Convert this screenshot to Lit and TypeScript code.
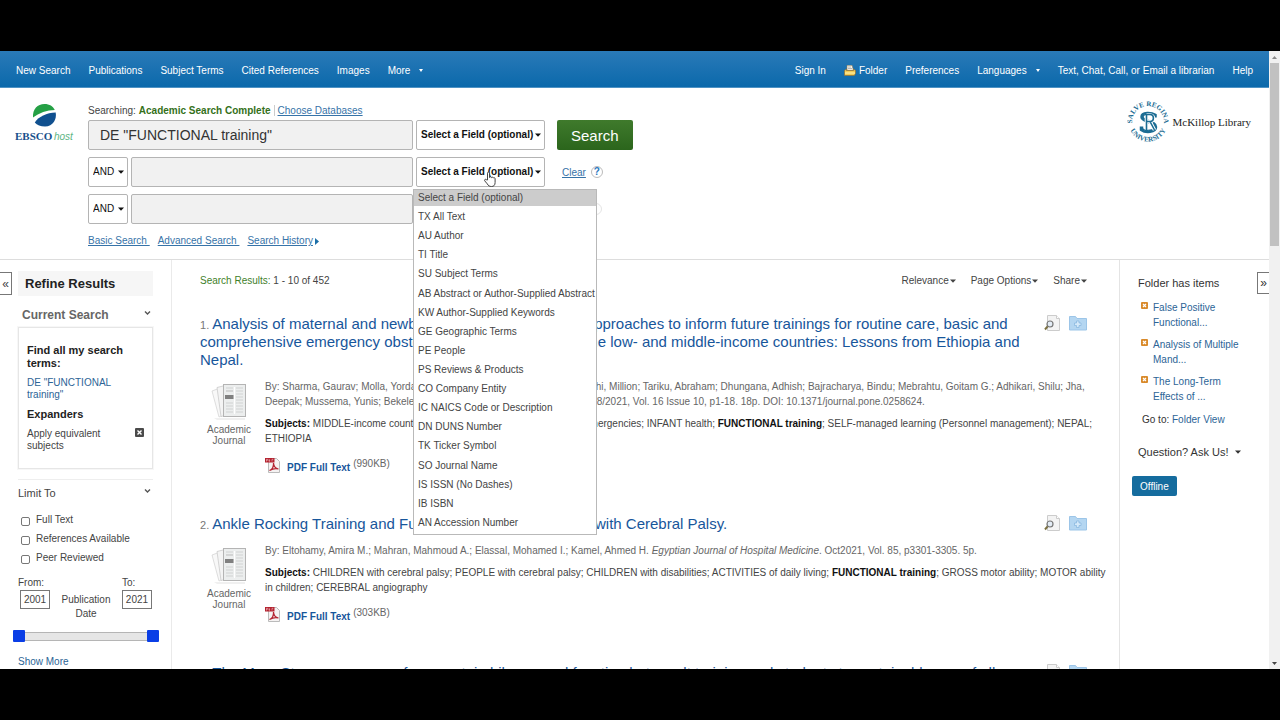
import { LitElement, html, svg, css } from "lit";
import { customElement, property, state } from "lit/decorators.js";
import { classMap } from "lit/directives/class-map.js";

const FIELDS = [
  "Select a Field (optional)",
  "TX All Text",
  "AU Author",
  "TI Title",
  "SU Subject Terms",
  "AB Abstract or Author-Supplied Abstract",
  "KW Author-Supplied Keywords",
  "GE Geographic Terms",
  "PE People",
  "PS Reviews & Products",
  "CO Company Entity",
  "IC NAICS Code or Description",
  "DN DUNS Number",
  "TK Ticker Symbol",
  "SO Journal Name",
  "IS ISSN (No Dashes)",
  "IB ISBN",
  "AN Accession Number",
];

interface Result {
  title: string;
  authors: string;
  journal: string;
  source: string;
  subjectsBefore: string;
  subjectsAfter: string;
  size: string;
}

const RESULTS: Result[] = [
  {
    title:
      "Analysis of maternal and newborn training curricula and approaches to inform future trainings for routine care, basic and comprehensive emergency obstetric and newborn care in the low- and middle-income countries: Lessons from Ethiopia and Nepal.",
    authors:
      "Sharma, Gaurav; Molla, Yordanos; Budhathoki, Shyam Sundar; Shibeshi, Million; Tariku, Abraham; Dhungana, Adhish; Bajracharya, Bindu; Mebrahtu, Goitam G.; Adhikari, Shilu; Jha, Deepak; Mussema, Yunis; Bekele, Abeba; Khadka, Neena.",
    journal: "PLoS ONE",
    source: "10/8/2021, Vol. 16 Issue 10, p1-18. 18p. DOI: 10.1371/journal.pone.0258624.",
    subjectsBefore: "MIDDLE-income countries; MATERNAL health; OBSTETRIC emergencies; INFANT health; ",
    subjectsAfter: "; SELF-managed learning (Personnel management); NEPAL; ETHIOPIA",
    size: "(990KB)",
  },
  {
    title: "Ankle Rocking Training and Functional Status in Children with Cerebral Palsy.",
    authors: "Eltohamy, Amira M.; Mahran, Mahmoud A.; Elassal, Mohamed I.; Kamel, Ahmed H.",
    journal: "Egyptian Journal of Hospital Medicine",
    source: "Oct2021, Vol. 85, p3301-3305. 5p.",
    subjectsBefore:
      "CHILDREN with cerebral palsy; PEOPLE with cerebral palsy; CHILDREN with disabilities; ACTIVITIES of daily living; ",
    subjectsAfter: "; GROSS motor ability; MOTOR ability in children; CEREBRAL angiography",
    size: "(303KB)",
  },
  {
    title:
      "The More Stereo response of a mountain bike ground function but result training and students to sustainable use of all",
    authors: "",
    journal: "",
    source: "",
    subjectsBefore: "",
    subjectsAfter: "",
    size: "",
  },
];

const FOLDER = ["False Positive Functional...", "Analysis of Multiple Mand...", "The Long-Term Effects of ..."];

const base = css`
  :host,
  * {
    box-sizing: border-box;
  }
  a {
    color: #2c6496;
    text-decoration: none;
  }
  button,
  input,
  select {
    font: inherit;
    color: inherit;
    margin: 0;
  }
  button {
    cursor: pointer;
    background: none;
    border: 0;
    padding: 0;
  }
  h2,
  h3,
  p,
  ul,
  ol {
    margin: 0;
    padding: 0;
    font-size: inherit;
    font-weight: normal;
    list-style: none;
  }
  svg {
    display: block;
    flex: none;
  }
`;

const caret = svg`<svg width="6" height="4" viewBox="0 0 6 4" aria-hidden="true"><path d="M0 .5h6L3 3.7z" fill="currentColor"/></svg>`;
const chevron = svg`<svg width="7" height="6" viewBox="0 0 7 6" aria-hidden="true"><path d="M1 1.5 3.5 4 6 1.5" fill="none" stroke="#555" stroke-width="1.4"/></svg>`;

@customElement("nav-bar")
class NavBar extends LitElement {
  static styles = [
    base,
    css`
      :host {
        display: block;
        background: linear-gradient(#2a7ab8, #0b69ab);
        border-bottom: 1px solid #4f93c4;
      }
      nav {
        display: flex;
        justify-content: space-between;
        align-items: center;
        height: 36px;
        padding: 2px 16px 0;
      }
      .group {
        display: flex;
        gap: 18px;
      }
      a {
        color: #fff;
        display: flex;
        align-items: center;
        white-space: nowrap;
      }
      .more {
        gap: 9px;
      }
      .folder {
        gap: 3px;
      }
    `,
  ];
  render() {
    const tri = html`<svg width="4" height="3" viewBox="0 0 4 3" aria-hidden="true"><path d="M0 0h4L2 3z" fill="#fff" /></svg>`;
    return html`<nav>
      <div class="group">
        <a href="#">New Search</a><a href="#">Publications</a><a href="#">Subject Terms</a>
        <a href="#">Cited References</a><a href="#">Images</a><a class="more" href="#">More ${tri}</a>
      </div>
      <div class="group">
        <a href="#">Sign In</a>
        <a class="folder" href="#">
          <svg width="12" height="11" viewBox="0 0 12 11" aria-hidden="true">
            <path d="M3 .3h5l1.500 5H3z" fill="#fbf8ee" stroke="#8d7a55" stroke-width=".6" />
            <path d="M4 2h3M4 3.500h4" stroke="#888" stroke-width=".6" />
            <path d="M.5 5.500 2.500 4v1.500h7V4l2 1.500v3l-1.200 2H.5z" fill="#f3cc55" stroke="#94692a" stroke-width=".6" />
            <path d="M1 8h10" stroke="#fff3b5" />
          </svg>
          Folder
        </a>
        <a href="#">Preferences</a>
        <a class="more" href="#">Languages ${tri}</a>
        <a href="#">Text, Chat, Call, or Email a librarian</a>
        <a href="#">Help</a>
      </div>
    </nav>`;
  }
}

@customElement("search-panel")
class SearchPanel extends LitElement {
  @state() selected = 0;

  static styles = [
    base,
    css`
      :host {
        display: flex;
        align-items: flex-start;
        padding: 13px 18px 10px 15px;
        border-bottom: 1px solid #ddd;
      }
      .logo {
        width: 60px;
        margin: 2px 13px 0 0;
      }
      .form {
        flex: 1;
        display: grid;
        gap: 7px;
      }
      .dbs {
        display: flex;
        align-items: center;
        gap: 3px;
        height: 18px;
        margin-bottom: -6px;
        color: #444;
      }
      .dbs strong {
        color: #347019;
      }
      .dbs a {
        border-left: 1px solid #ccc;
        padding-left: 3px;
        text-decoration: underline;
      }
      a {
        color: #3673a8;
      }
      .row {
        display: flex;
        gap: 3px;
        height: 30px;
      }
      .inputs {
        display: flex;
        gap: 3px;
        width: 325px;
      }
      .query {
        flex: 1;
        min-width: 0;
        background: #f1f1f1;
        border: 1px solid #b4b4b4;
        border-radius: 2px;
        padding: 0 11px;
        font-size: 14px;
        color: #333;
      }
      .pick {
        position: relative;
        display: block;
        color: #111;
      }
      .pick svg {
        position: absolute;
        right: 4px;
        top: 13px;
        pointer-events: none;
      }
      select {
        appearance: none;
        background: #fff;
        border: 1px solid #b4b4b4;
        border-radius: 2px;
        height: 30px;
        padding: 0 4px 2px;
      }
      .bool {
        width: 40px;
      }
      .field {
        width: 129px;
        font-weight: bold;
      }
      .go {
        margin-left: 9px;
        padding: 0 14px;
        background: linear-gradient(#3f7a2c, #2b651c);
        border-radius: 2px;
        color: #fff;
        font-size: 15px;
      }
      .side {
        display: flex;
        align-items: center;
        gap: 5px;
        padding-left: 14px;
      }
      .side a {
        text-decoration: underline;
      }
      .help {
        width: 12px;
        height: 12px;
        border: 1px solid #bbb;
        border-radius: 50%;
        color: #2a78c0;
        font-weight: bold;
        line-height: 10px;
      }
      .faint {
        opacity: 0.4;
        margin-left: 28px;
      }
      .modes {
        display: flex;
        gap: 8px;
        line-height: 16px;
        padding-top: 2px;
      }
      .modes a {
        text-decoration: underline;
      }
      .history {
        display: flex;
        align-items: center;
        gap: 2px;
      }
      .menu {
        position: absolute;
        z-index: 2;
        top: 32px;
        left: -3px;
        width: 184px;
        height: 346px;
        display: flex;
        flex-direction: column;
        justify-content: space-between;
        background: #fff;
        border: 1px solid #b9b9b9;
        padding-bottom: 3px;
        color: #444;
        font-weight: normal;
      }
      .menu li {
        line-height: 16px;
        padding: 0 4px;
        white-space: nowrap;
      }
      .menu .on {
        background: #ccc;
      }
      .pick .cursor {
        z-index: 3;
        right: 48px;
        top: 14px;
      }
      .library {
        display: flex;
        align-items: center;
        gap: 3px;
        font: 11px "Liberation Serif", serif;
        color: #222;
      }
    `,
  ];

  fieldSelect(open = false) {
    return html`<div class="pick">
      <select class="field" aria-label="Select a field">
        ${FIELDS.map((f) => html`<option>${f}</option>`)}
      </select>
      ${caret}
      ${open
        ? html`<ul class="menu" role="listbox" aria-label="Fields">
              ${FIELDS.map(
                (f, i) => html`<li
                  role="option"
                  aria-selected=${i === this.selected}
                  class=${classMap({ on: i === this.selected })}
                  @click=${() => (this.selected = i)}
                >
                  ${f}
                </li>`,
              )}
            </ul>
            <svg class="cursor" width="14" height="17" viewBox="0 0 14 17" aria-hidden="true">
              <path
                d="M4.500 9V2.200c0-1.500 2-1.500 2 0V6.500c.3-1 1.800-1 2 .2.400-.8 1.700-.7 1.900.3.500-.6 1.700-.4 1.700.7v3.800c0 2.600-1.300 4-3.500 4-2.300 0-3.300-.8-4.300-2.600L1.700 9.800c-.7-1.300.9-2 1.600-1.100z"
                fill="#fff"
                stroke="#444"
              />
            </svg>`
        : ""}
    </div>`;
  }

  boolSelect(row: number) {
    return html`<div class="pick">
      <select class="bool" aria-label=${`Operator for row ${row}`}>
        <option>AND</option>
        <option>OR</option>
        <option>NOT</option>
      </select>
      ${caret}
    </div>`;
  }

  render() {
    return html`
      <svg class="logo" width="60" height="42" viewBox="0 0 60 42" role="img" aria-label="EBSCOhost">
        <path d="M18 14.500C17.500 6 22.500 1 29.500 1c5 0 8.700 2.300 10.300 6C32 7 24 10 18 14.500z" fill="#25a045" />
        <path d="M19.800 19.500C23 14 32 9.500 40.700 9.500 42 16 38 23.500 30 23.500c-4.500 0-8-1.500-10.200-4z" fill="#10508f" />
        <text x="0" y="37" font-family="Liberation Serif, serif" font-weight="bold" font-size="11" fill="#17508c">EBSCO</text>
        <text x="39" y="37" font-family="Liberation Sans, sans-serif" font-style="italic" font-size="10" fill="#5bb583">host</text>
      </svg>
      <div class="form">
        <div class="dbs">
          <span>Searching:</span> <strong>Academic Search Complete</strong>
          <a href="#">Choose Databases</a>
        </div>
        <div class="row">
          <div class="inputs"><input class="query" aria-label="Search term 1" .value=${'DE "FUNCTIONAL training"'} /></div>
          ${this.fieldSelect()}
          <button class="go">Search</button>
        </div>
        <div class="row">
          <div class="inputs">${this.boolSelect(2)}<input class="query" aria-label="Search term 2" /></div>
          ${this.fieldSelect(true)}
          <div class="side"><a href="#">Clear</a><button class="help" aria-label="Help">?</button></div>
        </div>
        <div class="row">
          <div class="inputs">${this.boolSelect(3)}<input class="query" aria-label="Search term 3" /></div>
          ${this.fieldSelect()}
          <div class="side"><button class="help faint" aria-label="Add row"></button></div>
        </div>
        <div class="modes">
          <a href="#">Basic Search&nbsp;</a><a href="#">Advanced Search&nbsp;</a>
          <span class="history">
            <a href="#">Search History</a>
            <svg width="4" height="7" viewBox="0 0 4 7" aria-hidden="true"><path d="M0 0l4 3.500L0 7z" fill="#1b6fa8" /></svg>
          </span>
        </div>
      </div>
      <div class="library">
        <svg width="42" height="42" viewBox="0 0 42 42" role="img" aria-label="Salve Regina University">
          <defs>
            <path id="top" d="M5.500 25A16 16 0 1 1 36.500 25" />
            <path id="bottom" d="M1.500 21A19.500 19.500 0 0 0 40.500 21" />
          </defs>
          <g font-family="Liberation Serif, serif" font-weight="bold" font-size="7" fill="#1b6c93">
            <text><textPath href="#top" startOffset="50%" text-anchor="middle">SALVE REGINA</textPath></text>
            <text><textPath href="#bottom" startOffset="50%" text-anchor="middle">UNIVERSITY</textPath></text>
          </g>
          <g fill="none">
            <path
              d="M28 16.500v-2.200c-3.500-2.300-13-3-13 1.700 0 5 13.500 4 13.500 10 0 5-10 5.500-14 2.500v-3"
              stroke="#1b6c93"
              stroke-width="3.500"
            />
            <path d="M19.500 13.500v16M19.500 14h3.500c4.500 0 4.500 6.500 0 6.500h-3M23 20.500l4.500 8.500" stroke="#fff" stroke-width="3.600" />
            <path d="M19.500 13v16.500M17.500 13.500h5.500c4.500 0 4.500 7 0 7h-3M23 20.500l4.500 8.500M17.500 29.500h4" stroke="#1b6c93" stroke-width="1.600" />
          </g>
        </svg>
        <span>McKillop Library</span>
      </div>
    `;
  }
}

@customElement("refine-sidebar")
class RefineSidebar extends LitElement {
  @state() from = 2001;
  @state() to = 2021;

  static styles = [
    base,
    css`
      :host {
        display: flex;
        align-items: flex-start;
        gap: 6px;
        padding: 11px 18px 0 0;
        border-right: 1px solid #eaeaea;
        color: #444;
      }
      .toggle {
        width: 12px;
        height: 23px;
        margin-top: 1px;
        border: 1px solid #777;
        border-left: 0;
        font-size: 12px;
        line-height: 18px;
      }
      .panel {
        flex: 1;
        min-width: 0;
      }
      h2 {
        background: #f6f6f6;
        padding: 0 7px;
        font: bold 13px/25px "Liberation Sans", Arial, sans-serif;
        color: #222;
      }
      .head {
        display: flex;
        justify-content: space-between;
        align-items: center;
        padding: 0 2px 0 0;
        line-height: 20px;
        font-size: 11px;
      }
      .head svg {
        margin-bottom: 5px;
      }
      .current {
        margin-top: 9px;
        padding-left: 4px;
        font-size: 12px;
        color: #666;
      }
      .box {
        margin-top: 2px;
        padding: 16px 8px;
        border: 1px solid #e6e6e6;
        outline: 1px solid #f7f7f7;
        line-height: 12px;
      }
      .box h4 {
        margin: 0 0 7px;
        font-size: 11px;
        line-height: 13px;
        color: #222;
      }
      .term {
        display: block;
        margin-bottom: 7px;
      }
      .expander {
        display: flex;
        justify-content: space-between;
        align-items: flex-start;
      }
      .limit {
        margin-top: 10px;
        padding-top: 3px;
        border-top: 1px solid #eee;
      }
      .checks {
        display: grid;
        gap: 3px;
        padding: 9px 3px 0;
      }
      .checks label {
        display: flex;
        align-items: center;
        gap: 6px;
        line-height: 16px;
      }
      .checks input {
        appearance: none;
        width: 9px;
        height: 9px;
        margin: 2px 0 0;
        border: 1px solid #777;
        border-radius: 2px;
      }
      .dates {
        display: flex;
        justify-content: space-between;
        align-items: flex-start;
        margin-top: 10px;
        padding-right: 1px;
        line-height: 14px;
      }
      .dates label {
        display: grid;
      }
      .dates input {
        width: 30px;
        height: 19px;
        border: 1px solid #777;
        padding: 0;
        text-align: center;
      }
      .from input {
        margin-left: 2px;
      }
      .pub {
        text-align: center;
        padding-top: 17px;
      }
      .slider {
        display: grid;
        align-items: center;
        height: 12px;
        margin: 9px -6px 0 -5px;
        background: linear-gradient(#b5b5b5, #b5b5b5) 0 2px / 100% 1px no-repeat,
          linear-gradient(#b5b5b5, #b5b5b5) 0 10px / 100% 1px no-repeat,
          linear-gradient(#e6e6e6, #e6e6e6) 0 3px / 100% 7px no-repeat;
      }
      .slider input {
        grid-area: 1 / 1;
        appearance: none;
        width: 100%;
        height: 12px;
        background: none;
        pointer-events: none;
      }
      .slider input::-webkit-slider-thumb {
        appearance: none;
        pointer-events: auto;
        width: 12px;
        height: 12px;
        border-radius: 1px;
        background: #0a3ee6;
      }
      .show {
        display: block;
        margin-top: 12px;
        line-height: 16px;
      }
    `,
  ];

  render() {
    return html`
      <button class="toggle" aria-label="Hide refine results">«</button>
      <div class="panel">
        <h2>Refine Results</h2>
        <div class="head current"><h3><b>Current Search</b></h3>${chevron}</div>
        <div class="box">
          <h4>Find all my search terms:</h4>
          <a class="term" href="#">DE "FUNCTIONAL training"</a>
          <h4>Expanders</h4>
          <div class="expander">
            <span>Apply equivalent<br />subjects</span>
            <button aria-label="Remove expander">
              <svg width="9" height="9" viewBox="0 0 9 9">
                <rect width="9" height="9" rx="1" fill="#4a4a4a" />
                <path d="M2.500 2.500l4 4m0-4l-4 4" stroke="#fff" stroke-width="1.400" />
              </svg>
            </button>
          </div>
        </div>
        <div class="head limit"><h3>Limit To</h3>${chevron}</div>
        <div class="checks">
          ${["Full Text", "References Available", "Peer Reviewed"].map(
            (t) => html`<label><input type="checkbox" />${t}</label>`,
          )}
        </div>
        <div class="dates">
          <label class="from">From:<input .value=${String(this.from)} /></label>
          <span class="pub">Publication<br />Date</span>
          <label>To:<input .value=${String(this.to)} /></label>
        </div>
        <div class="slider">
          <input type="range" min="2001" max="2021" .value=${String(this.from)} aria-label="From year"
            @input=${(e: Event) => (this.from = Number((e.target as HTMLInputElement).value))} />
          <input type="range" min="2001" max="2021" .value=${String(this.to)} aria-label="To year"
            @input=${(e: Event) => (this.to = Number((e.target as HTMLInputElement).value))} />
        </div>
        <a class="show" href="#">Show More</a>
      </div>
    `;
  }
}

@customElement("result-item")
class ResultItem extends LitElement {
  @property({ attribute: false }) item!: Result;
  @property({ type: Number }) index = 1;

  static styles = [
    base,
    css`
      :host {
        display: block;
      }
      .top {
        display: flex;
        justify-content: space-between;
        align-items: flex-start;
        gap: 16px;
      }
      h3 {
        font-size: 15px;
        line-height: 18px;
      }
      h3 span {
        font-size: 11px;
        line-height: 1;
        color: #777;
      }
      h3 a {
        color: #17569b;
      }
      .tools {
        display: flex;
        gap: 9px;
        padding-right: 26px;
      }
      .body {
        display: flex;
        gap: 7px;
        margin-top: 10px;
      }
      .kind {
        width: 58px;
        padding-top: 4px;
        text-align: center;
        line-height: 11px;
        color: #666;
      }
      .kind svg {
        margin: 0 auto 3px;
      }
      .text {
        flex: 1;
        line-height: 15px;
        color: #666;
      }
      .subjects {
        margin-top: 7px;
        color: #444;
      }
      b {
        color: #111;
      }
      .pdf {
        display: flex;
        align-items: center;
        gap: 7px;
        margin-top: 10px;
      }
      .pdf a {
        font-weight: bold;
        color: #17569b;
        padding-top: 4px;
      }
      .pdf span {
        margin: 0 0 4px -4px;
      }
    `,
  ];

  render() {
    const r = this.item;
    return html`
      <div class="top">
        <h3><span>${this.index}. </span><a href="#">${r.title}</a></h3>
        <div class="tools">
          <button aria-label="Preview">
            <svg width="16" height="16" viewBox="0 0 16 16">
              <path d="M3.500.5h9l3 3v12h-12z" fill="#f3f3f3" stroke="#ccc" />
              <path d="M12.500.5v3h3" fill="#fff" stroke="#ccc" />
              <path d="M3.800 11.200 1 14.500" stroke="#7a7040" stroke-width="2" />
              <circle cx="6" cy="9" r="3" fill="#e4edf6" stroke="#777" stroke-width="1.200" />
            </svg>
          </button>
          <button aria-label="Add to folder">
            <svg width="18" height="16" viewBox="0 0 18 16">
              <path d="M.5 1.500h6l1.500 2h9.500v11.500H.5z" fill="#b4d6f1" stroke="#9cc5e8" />
              <path d="M7.500 6h2.500v2h2v2.500h-2v2H7.500v-2h-2V8h2z" fill="#d4e9f9" stroke="#84b5de" stroke-width=".7" />
            </svg>
          </button>
        </div>
      </div>
      ${r.authors
        ? html`<div class="body">
            <div class="kind">
              <svg width="36" height="38" viewBox="0 0 36 38" aria-hidden="true">
                <path d="M3 35h31v2H6z" fill="#f0f0f0" />
                <path d="M1 8l8-3 6 26-7 3z" fill="#f8f8f8" stroke="#d0d0d0" stroke-width=".7" />
                <path d="M6 4.500l8-2v30l-4 1z" fill="#f4f4f4" stroke="#c4c4c4" stroke-width=".7" />
                <rect x="12.500" y="1.500" width="22" height="32" fill="#eceeee" stroke="#b4b4b4" />
                <path d="M15 5h7M25 5h7M25 8h7M25 11h7M15 20h7M15 23h7M15 26h7M15 29h7M25 14h7M25 17h7M25 20h7M25 23h7M25 26h7M25 29h7" stroke="#d0d2d2" />
                <path d="M15 8h7" stroke="#bbb" />
                <path d="M14 12h8.500v4H14z" fill="#808080" />
                <path d="M23.500 4v27" stroke="#fff" />
              </svg>
              Academic<br />Journal
            </div>
            <div class="text">
              <p>By: ${r.authors} <i>${r.journal}</i>. ${r.source}</p>
              <p class="subjects"><b>Subjects:</b> ${r.subjectsBefore}<b>FUNCTIONAL training</b>${r.subjectsAfter}</p>
              <div class="pdf">
                <svg width="15" height="15" viewBox="0 0 15 15" aria-hidden="true">
                  <path d="M3.500.5h8l3 3v11h-11z" fill="#f5f2f2" stroke="#bbb" />
                  <path d="M0 0h9.500v4.500H0z" fill="#b3222f" />
                  <path d="M1.500 3.500V1.300h1v1h-1M4 1.300v2h.6V1.500M7 3.500V1.300h1.300" stroke="#f3c5c8" stroke-width=".6" fill="none" />
                  <path d="M4.500 12.500c2.500-1 4.200-4.200 4-7.500.3 3.500 2 5.500 5 6-3-.8-6-.2-9 1.500z" fill="none" stroke="#b3222f" stroke-width="1.200" />
                </svg>
                <a href="#">PDF Full Text</a> <span>${r.size}</span>
              </div>
            </div>
          </div>`
        : ""}
    `;
  }
}

@customElement("folder-sidebar")
class FolderSidebar extends LitElement {
  static styles = [
    base,
    css`
      :host {
        display: flex;
        align-items: flex-start;
        justify-content: space-between;
        padding: 12px 0 0 12px;
        border-left: 1px solid #e4e4e4;
        color: #333;
      }
      h2 {
        padding-left: 6px;
        font-size: 11px;
        line-height: 22px;
      }
      ul {
        display: grid;
        gap: 7px;
        padding: 6px 0 0 9px;
      }
      li {
        display: flex;
        gap: 5px;
        line-height: 15px;
      }
      li a {
        width: 90px;
      }
      .goto {
        padding: 8px 0 0 10px;
        line-height: 15px;
      }
      .ask {
        display: flex;
        align-items: center;
        gap: 6px;
        padding-left: 6px;
        margin: 16px 0 15px;
        font-size: 11px;
        line-height: 18px;
      }
      .offline {
        height: 20px;
        padding: 0 8px;
        border-radius: 2px;
        background: #156c9e;
        color: #fff;
      }
      .toggle {
        width: 12px;
        height: 22px;
        border: 1px solid #777;
        border-right: 0;
        font-size: 12px;
        line-height: 18px;
      }
    `,
  ];
  render() {
    return html`
      <div>
        <h2>Folder has items</h2>
        <ul>
          ${FOLDER.map(
            (f) => html`<li>
              <svg width="7" height="11" viewBox="0 0 7 11" aria-hidden="true">
                <rect y="2" width="7" height="7" rx="1" fill="#d98a2b" />
                <path d="M2 4l3 3m0-3L2 7" stroke="#fff" stroke-width="1.200" />
              </svg>
              <a href="#">${f}</a>
            </li>`,
          )}
        </ul>
        <p class="goto">Go to: <a href="#">Folder View</a></p>
        <button class="ask">Question? Ask Us! ${caret}</button>
        <button class="offline">Offline</button>
      </div>
      <button class="toggle" aria-label="Hide folder">»</button>
    `;
  }
}

@customElement("app-root")
class AppRoot extends LitElement {
  static styles = [
    base,
    css`
      :host {
        display: flex;
        height: 100vh;
        padding: 51px 0;
        background: #000;
        overflow: hidden;
        font: 10px "Liberation Sans", Arial, sans-serif;
      }
      .page {
        flex: 1;
        min-width: 0;
        overflow: hidden;
        background: #fff;
      }
      .columns {
        display: grid;
        grid-template-columns: 172px 1fr 150px;
      }
      main {
        padding: 13px 6px 0 28px;
      }
      .bar {
        display: flex;
        gap: 15px;
        line-height: 16px;
        padding-right: 26px;
        color: #444;
      }
      .count {
        flex: 1;
      }
      .count span {
        color: #3f7f2a;
      }
      .bar button {
        display: flex;
        align-items: center;
        gap: 1px;
      }
      .list {
        display: grid;
        gap: 40px;
        padding-top: 26px;
      }
      .scroll {
        display: flex;
        flex-direction: column;
        align-items: center;
        gap: 4px;
        width: 11px;
        padding: 5px 0 4px;
        background: #f1f1f1;
      }
      .thumb {
        width: 9px;
        height: 30%;
        background: #c1c1c1;
      }
      .down {
        margin-top: auto;
      }
    `,
  ];
  render() {
    return html`
      <div class="page">
        <nav-bar></nav-bar>
        <search-panel></search-panel>
        <div class="columns">
          <refine-sidebar></refine-sidebar>
          <main>
            <div class="bar">
              <h2 class="count"><span>Search Results:</span> 1 - 10 of 452</h2>
              <button>Relevance${caret}</button>
              <button>Page Options${caret}</button>
              <button>Share${caret}</button>
            </div>
            <div class="list">
              ${RESULTS.map((r, i) => html`<result-item .item=${r} .index=${i + 1}></result-item>`)}
            </div>
          </main>
          <folder-sidebar></folder-sidebar>
        </div>
      </div>
      <div class="scroll" aria-hidden="true">
        <svg width="5" height="3" viewBox="0 0 5 3"><path d="M0 3h5L2.500 0z" fill="#888" /></svg>
        <div class="thumb"></div>
        <svg class="down" width="5" height="3" viewBox="0 0 5 3"><path d="M0 0h5L2.500 3z" fill="#444" /></svg>
      </div>
    `;
  }
}
